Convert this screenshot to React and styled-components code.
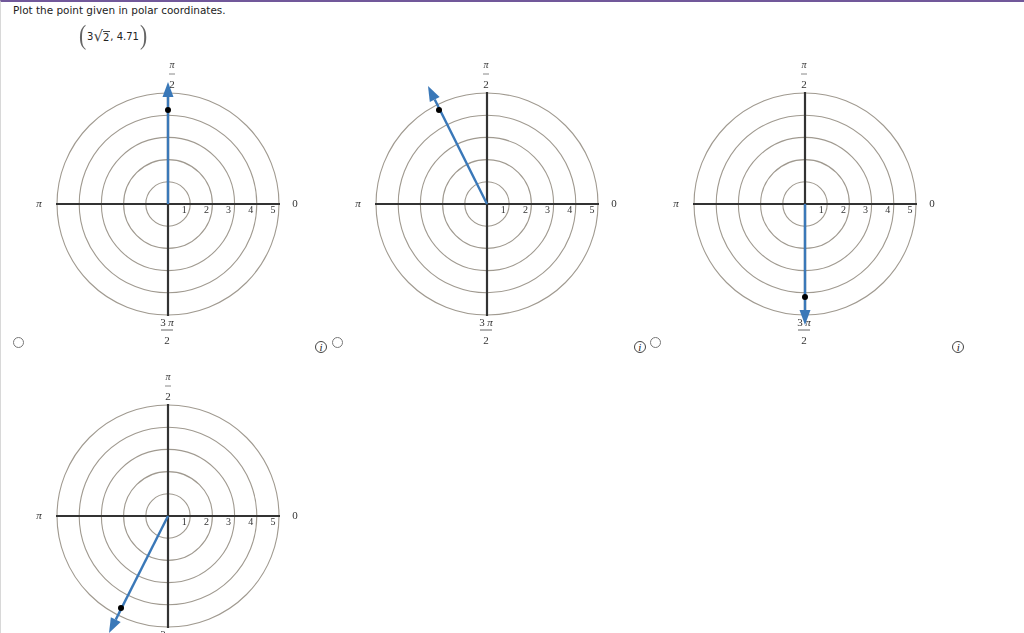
import React from "react";
import styled, { createGlobalStyle } from "styled-components";

const GlobalStyle = createGlobalStyle`
  html, body {
    margin: 0;
    height: 100%;
    overflow: hidden;
    background: #fff;
  }
`;

const Page = styled.div`
  box-sizing: border-box;
  height: 633px;
  overflow: hidden;
  padding: 0 0 0 12px;
  border-top: 2px solid #71589a;
  border-left: 1px solid #d8d8d8;
  font-family: "DejaVu Sans", Verdana, sans-serif;
  color: #222;
`;

const Prompt = styled.p`
  margin: 0;
  height: 16px;
  font-size: 10.45px;
  line-height: 17px;
`;

const Formula = styled.div`
  display: flex;
  align-items: center;
  height: 37px;
  margin-left: 65px;
  font-size: 10px;
`;

const Paren = styled.span`
  font-family: "Liberation Serif", serif;
  font-size: 27px;
  font-weight: 400;
  line-height: 27px;
  color: #666;
  transform: scaleX(0.8);
  margin-top: -3px;
`;

const Radical = styled.span`
  font-size: 15px;
  line-height: 15px;
  color: #444;
`;

const Radicand = styled.span`
  border-top: 1px solid #444;
  padding: 0 1px 0 0;
  line-height: 11px;
`;

const Options = styled.div`
  display: grid;
  grid-template-columns: repeat(3, 318.7px);
  grid-auto-rows: 312px;
`;

const Option = styled.label`
  display: flex;
  align-items: flex-start;
`;

const Radio = styled.input.attrs({ type: "radio", name: "answer" })`
  appearance: none;
  flex: none;
  box-sizing: border-box;
  width: 11px;
  height: 11px;
  margin: 282px 0 0 0;
  border: 1px solid #777;
  border-radius: 50%;
  background: #fff;
`;

const Chart = styled.svg`
  flex: none;
  display: block;
  width: 292px;
  height: 297px;
  filter: blur(0.3px);
`;

const Ring = styled.circle`
  fill: none;
  stroke: #a09a90;
  stroke-width: 1.1;
`;

const Axis = styled.line`
  stroke: #333;
  stroke-width: 2.2;
`;

const Label = styled.text`
  font-family: "Liberation Serif", serif;
  font-size: ${(p) => p.$size || 11}px;
  font-style: ${(p) => (p.$italic ? "italic" : "normal")};
  fill: #333;
  text-anchor: middle;
`;

const InfoIcon = styled.span`
  flex: none;
  box-sizing: border-box;
  width: 12px;
  height: 12px;
  margin-top: 286px;
  margin-left: -1px;
  border: 1px solid #444;
  border-radius: 50%;
  font-family: "Liberation Serif", serif;
  font-size: 11px;
  font-style: italic;
  line-height: 11px;
  text-align: center;
  color: #222;
`;

const RADII = [22.2, 44.4, 66.6, 88.8, 111];

// tip and dot are relative to the pole, in screen pixels
const charts = [
  { tip: [0, -122], dot: [0, -94], topX: 4 },
  { tip: [-59, -118], dot: [-48, -94], topX: -1 },
  { tip: [0, 121], dot: [0, 93], topX: -1 },
  { tip: [-59, 117], dot: [-47, 92], topX: 0 },
];

function Arrow({ tip }) {
  const [x, y] = tip;
  const len = Math.hypot(x, y);
  const ux = x / len;
  const uy = y / len;
  const bx = x - ux * 15;
  const by = y - uy * 15;
  const head = [
    [x, y],
    [bx - uy * 5.5, by + ux * 5.5],
    [bx + uy * 5.5, by - ux * 5.5],
  ];
  return (
    <g>
      <line x1="0" y1="0" x2={bx} y2={by} stroke="#3a78b8" strokeWidth="2.4" />
      <polygon points={head.map((p) => p.join(",")).join(" ")} fill="#3a78b8" />
    </g>
  );
}

function PolarChart({ tip, dot, topX }) {
  return (
    <Chart viewBox="-144 -149 292 297">
      {RADII.map((r) => (
        <Ring key={r} cx="0" cy="0" r={r} />
      ))}
      <Axis x1="-112" y1="0" x2="112" y2="0" />
      <Axis x1="0" y1="-112" x2="0" y2="112" />
      {[1, 2, 3, 4, 5].map((n) => (
        <Label key={n} x={n * 22.2 - 6} y="9" $size={10}>
          {n}
        </Label>
      ))}
      <Label x="-129" y="3" $italic>π</Label>
      <Label x="127" y="3">0</Label>
      <Label x={topX} y="-136" $size={10} $italic>π</Label>
      <line x1={topX - 3} y1="-130" x2={topX + 3} y2="-130" stroke="#888" strokeWidth="1" />
      <Label x={topX} y="-116">2</Label>
      <Label x="-1" y="122">3 <tspan fontStyle="italic">π</tspan></Label>
      <line x1="-7" y1="126" x2="5" y2="126" stroke="#666" strokeWidth="1" />
      <Label x="-1" y="140">2</Label>
      <Arrow tip={tip} />
      <circle cx={dot[0]} cy={dot[1]} r="3" fill="#000" />
    </Chart>
  );
}

export default function App() {
  return (
    <Page>
      <GlobalStyle />
      <Prompt>Plot the point given in polar coordinates.</Prompt>
      <Formula>
        <Paren>(</Paren>
        <span>3</span>
        <Radical>√</Radical>
        <Radicand>2</Radicand>
        <span>, 4.71</span>
        <Paren>)</Paren>
      </Formula>
      <Options>
        {charts.map((c, i) => (
          <Option key={i}>
            <Radio />
            <PolarChart tip={c.tip} dot={c.dot} topX={c.topX} />
            <InfoIcon>i</InfoIcon>
          </Option>
        ))}
      </Options>
    </Page>
  );
}
